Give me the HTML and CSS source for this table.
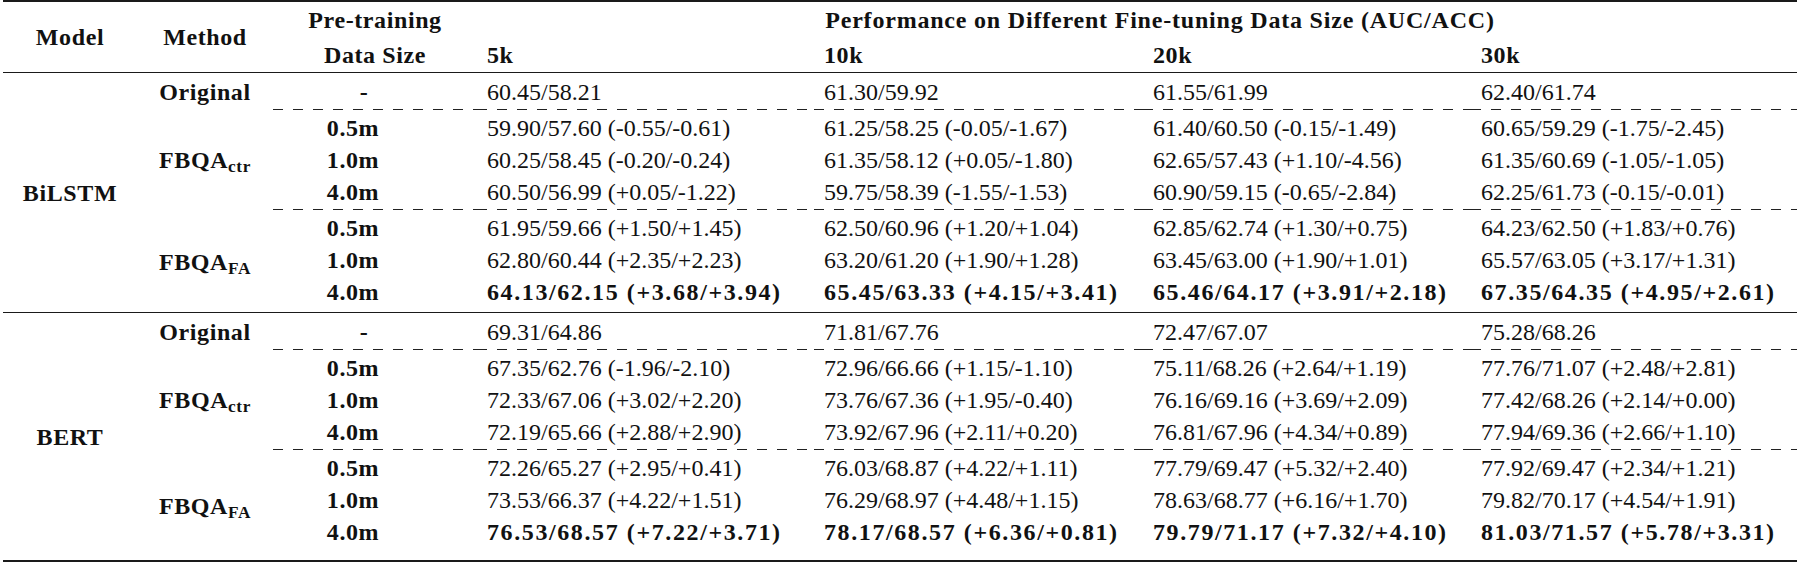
FILE: index.html
```html
<!DOCTYPE html>
<html>
<head>
<meta charset="utf-8">
<link rel="stylesheet" href="styles.css">
</head>
<body>
<table class="tbl">
  <colgroup>
    <col class="c-model"><col class="c-method"><col class="c-size">
    <col class="c-d1"><col class="c-d2"><col class="c-d3"><col class="c-d4">
  </colgroup>
  <thead>
    <tr class="h1">
      <th rowspan="2" class="ctr">Model</th>
      <th rowspan="2" class="ctr">Method</th>
      <th class="ctr">Pre-training</th>
      <th colspan="4" class="ctr perf">Performance on Different Fine-tuning Data Size (AUC/ACC)</th>
    </tr>
    <tr class="h2">
      <th class="ctr">Data Size</th>
      <th class="dl">5k</th><th class="dl">10k</th><th class="dl">20k</th><th class="dl">30k</th>
    </tr>
  </thead>
  <tbody class="grp">
    <tr class="r first">
      <td rowspan="9" class="ctr b">BiLSTM</td>
      <td class="ctr b">Original</td>
      <td class="ctr b nil">-</td>
      <td class="dl">60.45/58.21</td><td class="dl">61.30/59.92</td><td class="dl">61.55/61.99</td><td class="dl">62.40/61.74</td>
    </tr>
    <tr class="sep"><td></td><td class="dash"></td><td class="dash"></td><td class="dash"></td><td class="dash"></td><td class="dash"></td></tr>
    <tr class="r">
      <td rowspan="3" class="ctr b">FBQA<sub>ctr</sub></td>
      <td class="ctr b sz">0.5m</td>
      <td class="dl">59.90/57.60 (-0.55/-0.61)</td><td class="dl">61.25/58.25 (-0.05/-1.67)</td><td class="dl">61.40/60.50 (-0.15/-1.49)</td><td class="dl">60.65/59.29 (-1.75/-2.45)</td>
    </tr>
    <tr class="r">
      <td class="ctr b sz">1.0m</td>
      <td class="dl">60.25/58.45 (-0.20/-0.24)</td><td class="dl">61.35/58.12 (+0.05/-1.80)</td><td class="dl">62.65/57.43 (+1.10/-4.56)</td><td class="dl">61.35/60.69 (-1.05/-1.05)</td>
    </tr>
    <tr class="r">
      <td class="ctr b sz">4.0m</td>
      <td class="dl">60.50/56.99 (+0.05/-1.22)</td><td class="dl">59.75/58.39 (-1.55/-1.53)</td><td class="dl">60.90/59.15 (-0.65/-2.84)</td><td class="dl">62.25/61.73 (-0.15/-0.01)</td>
    </tr>
    <tr class="sep"><td></td><td class="dash"></td><td class="dash"></td><td class="dash"></td><td class="dash"></td><td class="dash"></td></tr>
    <tr class="r">
      <td rowspan="3" class="ctr b">FBQA<sub>FA</sub></td>
      <td class="ctr b sz">0.5m</td>
      <td class="dl">61.95/59.66 (+1.50/+1.45)</td><td class="dl">62.50/60.96 (+1.20/+1.04)</td><td class="dl">62.85/62.74 (+1.30/+0.75)</td><td class="dl">64.23/62.50 (+1.83/+0.76)</td>
    </tr>
    <tr class="r">
      <td class="ctr b sz">1.0m</td>
      <td class="dl">62.80/60.44 (+2.35/+2.23)</td><td class="dl">63.20/61.20 (+1.90/+1.28)</td><td class="dl">63.45/63.00 (+1.90/+1.01)</td><td class="dl">65.57/63.05 (+3.17/+1.31)</td>
    </tr>
    <tr class="r last">
      <td class="ctr b sz">4.0m</td>
      <td class="dl b best">64.13/62.15 (+3.68/+3.94)</td><td class="dl b best">65.45/63.33 (+4.15/+3.41)</td><td class="dl b best">65.46/64.17 (+3.91/+2.18)</td><td class="dl b best">67.35/64.35 (+4.95/+2.61)</td>
    </tr>
  </tbody>
  <tbody class="grp">
    <tr class="r first">
      <td rowspan="9" class="ctr b">BERT</td>
      <td class="ctr b">Original</td>
      <td class="ctr b nil">-</td>
      <td class="dl">69.31/64.86</td><td class="dl">71.81/67.76</td><td class="dl">72.47/67.07</td><td class="dl">75.28/68.26</td>
    </tr>
    <tr class="sep"><td></td><td class="dash"></td><td class="dash"></td><td class="dash"></td><td class="dash"></td><td class="dash"></td></tr>
    <tr class="r">
      <td rowspan="3" class="ctr b">FBQA<sub>ctr</sub></td>
      <td class="ctr b sz">0.5m</td>
      <td class="dl">67.35/62.76 (-1.96/-2.10)</td><td class="dl">72.96/66.66 (+1.15/-1.10)</td><td class="dl">75.11/68.26 (+2.64/+1.19)</td><td class="dl">77.76/71.07 (+2.48/+2.81)</td>
    </tr>
    <tr class="r">
      <td class="ctr b sz">1.0m</td>
      <td class="dl">72.33/67.06 (+3.02/+2.20)</td><td class="dl">73.76/67.36 (+1.95/-0.40)</td><td class="dl">76.16/69.16 (+3.69/+2.09)</td><td class="dl">77.42/68.26 (+2.14/+0.00)</td>
    </tr>
    <tr class="r">
      <td class="ctr b sz">4.0m</td>
      <td class="dl">72.19/65.66 (+2.88/+2.90)</td><td class="dl">73.92/67.96 (+2.11/+0.20)</td><td class="dl">76.81/67.96 (+4.34/+0.89)</td><td class="dl">77.94/69.36 (+2.66/+1.10)</td>
    </tr>
    <tr class="sep"><td></td><td class="dash"></td><td class="dash"></td><td class="dash"></td><td class="dash"></td><td class="dash"></td></tr>
    <tr class="r">
      <td rowspan="3" class="ctr b">FBQA<sub>FA</sub></td>
      <td class="ctr b sz">0.5m</td>
      <td class="dl">72.26/65.27 (+2.95/+0.41)</td><td class="dl">76.03/68.87 (+4.22/+1.11)</td><td class="dl">77.79/69.47 (+5.32/+2.40)</td><td class="dl">77.92/69.47 (+2.34/+1.21)</td>
    </tr>
    <tr class="r">
      <td class="ctr b sz">1.0m</td>
      <td class="dl">73.53/66.37 (+4.22/+1.51)</td><td class="dl">76.29/68.97 (+4.48/+1.15)</td><td class="dl">78.63/68.77 (+6.16/+1.70)</td><td class="dl">79.82/70.17 (+4.54/+1.91)</td>
    </tr>
    <tr class="r last final">
      <td class="ctr b sz">4.0m</td>
      <td class="dl b best">76.53/68.57 (+7.22/+3.71)</td><td class="dl b best">78.17/68.57 (+6.36/+0.81)</td><td class="dl b best">79.79/71.17 (+7.32/+4.10)</td><td class="dl b best">81.03/71.57 (+5.78/+3.31)</td>
    </tr>
  </tbody>
</table>
</body>
</html>
```
FILE: styles.css
```css
html, body {
  margin: 0;
  padding: 0;
  background: #ffffff;
}

body {
  font-family: "Liberation Serif", "DejaVu Serif", serif;
  font-size: 24px;
  color: #111111;
}

.tbl {
  font-family: "Liberation Serif", "DejaVu Serif", serif;
  border-collapse: collapse;
  table-layout: fixed;
  width: 1794px;
  margin: 0 3px;
}

.c-model { width: 134px; }
.c-method { width: 136px; }
.c-size { width: 204px; }
.c-d1 { width: 337px; }
.c-d2 { width: 329px; }
.c-d3 { width: 328px; }
.c-d4 { width: 326px; }

th, td {
  padding: 0;
  white-space: nowrap;
  vertical-align: middle;
}

th {
  font-weight: bold;
  letter-spacing: 0.6px;
}

.ctr { text-align: center; }
.dl { text-align: left; padding-left: 10px; }
.b { font-weight: bold; letter-spacing: 0.6px; }
.best { letter-spacing: 1.6px; }
.sz { padding-right: 44px; }
.nil { padding-right: 22px; }
.h1 th.perf {
  padding-left: 46px;
  letter-spacing: 0.8px;
}

.h1 {
  border-top: 2px solid #1a1a1a;
}
.h1 th {
  height: 35px;
  line-height: 35px;
  padding-top: 1px;
}
.h2 th {
  height: 34px;
  line-height: 34px;
}
.h2 {
  border-bottom: 1px solid #1a1a1a;
}

.grp {
  border-bottom: 1px solid #1a1a1a;
}
.grp:last-child {
  border-bottom: 2px solid #1a1a1a;
}

.r td {
  height: 32px;
  line-height: 32px;
}
.r.first td {
  padding-top: 3px;
}
.r.first td[rowspan] {
  padding-top: 0;
}
.r.last td {
  padding-bottom: 4px;
}
.r.final td {
  padding-bottom: 12px;
}

.sep td {
  height: 4px;
  line-height: 0;
  font-size: 0;
  padding: 0;
}
.sep td.dash {
  background-image: repeating-linear-gradient(90deg, #222222 0 10px, transparent 10px 20px);
  background-size: 100% 1px;
  background-repeat: no-repeat;
  background-position: 0 1px;
}

sub {
  font-size: 0.72em;
  vertical-align: -0.22em;
  line-height: 0;
}
```
